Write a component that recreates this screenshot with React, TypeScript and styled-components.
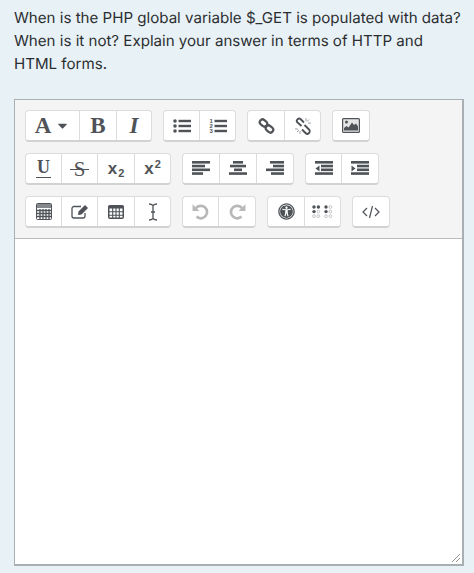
import React from "react";
import styled, { createGlobalStyle } from "styled-components";
import { FaUniversalAccess, FaCaretDown } from "react-icons/fa";

const INK = "#4f5357";

const GlobalStyle = createGlobalStyle`
  html, body {
    margin: 0;
    padding: 0;
    height: 100%;
    background: #e8f1f5;
  }
`;

// bars of the align / indent icons, as [x, width]
function Bars({ bars, children }: { bars: number[][]; children?: React.ReactNode }) {
  return (
    <svg width="18" height="15" viewBox="0 0 18 15">
      {bars.map(([x, w], i) => (
        <rect key={i} x={x} y={i * 3.75} width={w} height="2.6" fill={INK} />
      ))}
      {children}
    </svg>
  );
}

function ListUlIcon() {
  return (
    <svg width="18" height="14" viewBox="0 0 18 14">
      {[2, 7, 12].map((y) => (
        <g key={y}>
          <circle cx="2" cy={y} r="1.8" fill={INK} />
          <rect x="5.5" y={y - 1.2} width="12.5" height="2.4" fill={INK} />
        </g>
      ))}
    </svg>
  );
}

function ListOlIcon() {
  return (
    <svg width="18" height="18" viewBox="0 0 18 18">
      {[4, 9, 14].map((y, i) => (
        <g key={y}>
          <text x="0.5" y={y + 2} fontFamily="'Liberation Sans', sans-serif" fontWeight="bold" fontSize="6" fill={INK}>
            {i + 1}
          </text>
          <rect x="5.5" y={y - 1.2} width="12.5" height="2.4" fill={INK} />
        </g>
      ))}
    </svg>
  );
}

function LinkIcon() {
  return (
    <svg width="17" height="16" viewBox="0 0 17 16">
      <g fill="none" stroke={INK} strokeWidth="2.2">
        <rect x="1.5" y="2.2" width="8" height="5.6" rx="2.8" transform="rotate(40 5.5 5)" />
        <rect x="7.5" y="8.2" width="8" height="5.6" rx="2.8" transform="rotate(40 11.5 11)" />
      </g>
    </svg>
  );
}

function UnlinkIcon() {
  return (
    <svg width="18" height="18" viewBox="0 0 18 18">
      <path
        d="M7.5 9 3 5A2.400 2.400 0 0 1 6.500 2L10 5.500M10.500 8 15 12.500A2.400 2.400 0 0 1 11.500 16L8 12.500"
        fill="none"
        stroke={INK}
        strokeWidth="1.900"
      />
      <path
        d="M12 1v3M15 2.500l-2 2M17 6h-3M1 12h3M3 15l2-2M6 14v3"
        stroke="#85888b"
        strokeWidth="0.8"
      />
    </svg>
  );
}

function ImageIcon() {
  return (
    <svg width="18" height="15" viewBox="0 0 18 15">
      <rect x="0.6" y="0.6" width="16.8" height="13.8" rx="1" fill="#e4e4e4" stroke={INK} strokeWidth="1.2" />
      <circle cx="4.5" cy="4" r="1.5" fill={INK} />
      <path d="M2 12.5V10l2.5-2 2 1.500L10 4.500l2 2.500 2-1.500 2 3v4z" fill={INK} />
    </svg>
  );
}

function CalculatorIcon() {
  return (
    <svg width="16" height="17" viewBox="0 0 16 17">
      <rect x="0.5" y="0.5" width="15" height="16" rx="1" fill="#fff" stroke={INK} />
      <rect x="1" y="1" width="14" height="4" fill="#85888b" />
      <path
        d="M1 7.500h14M1 10.500h14M1 13.500h14M4 6v10M7 6v10M10 6v10M13 6v10"
        stroke={INK}
        strokeWidth="1.3"
        fill="none"
      />
    </svg>
  );
}

function EditIcon() {
  return (
    <svg width="18" height="15" viewBox="0 0 18 15">
      <path
        d="M10 2.500H3a2 2 0 0 0-2 2v7.500a2 2 0 0 0 2 2h9a2 2 0 0 0 2-2V9"
        fill="none"
        stroke={INK}
        strokeWidth="1.300"
      />
      <path d="M7.500 7.500 14 1l3 3-6.500 6.500-3.500.5z" fill={INK} />
    </svg>
  );
}

function TableIcon() {
  return (
    <svg width="16" height="14" viewBox="0 0 16 14">
      <rect x="0.75" y="0.75" width="14.5" height="12.5" rx="1" fill="#fff" stroke={INK} strokeWidth="1.5" />
      <rect x="1" y="1" width="14" height="2.5" fill={INK} />
      <path d="M1 6.800h14M1 10.200h14M4.700 3v10M8 3v10M11.300 3v10" stroke={INK} strokeWidth="1.100" fill="none" />
    </svg>
  );
}

function CursorIcon() {
  return (
    <svg width="10" height="18" viewBox="0 0 10 18">
      <path
        d="M1 1c2 0 3 .5 4 1.500C6 1.500 7 1 9 1M5 2.500v13M1 17c2 0 3-.5 4-1.500 1 1 2 1.500 4 1.500M3 9h4"
        stroke={INK}
        strokeWidth="1.3"
        fill="none"
      />
    </svg>
  );
}

function UndoIcon({ flip }: { flip?: boolean }) {
  return (
    <svg width="17" height="17" viewBox="0 0 15 15" style={flip ? { transform: "scaleX(-1)" } : undefined}>
      <path d="M3.500 4.500A5.500 5.500 0 1 1 4 12" fill="none" stroke="#b8b8b8" strokeWidth="2.400" />
      <path d="M0.500 1v6h6z" fill="#b8b8b8" />
    </svg>
  );
}

// which dots of the two braille cells are dark
const brailleDark = [
  [0, 1, 2],
  [0, 2],
];

function BrailleIcon() {
  const dots = [];
  for (let c = 0; c < 2; c++) {
    for (let i = 0; i < 6; i++) {
      const cx = 2 + c * 12 + (i % 2) * 4.4;
      const cy = 2 + Math.floor(i / 2) * 4.6;
      dots.push(
        brailleDark[c].includes(i) ? (
          <circle key={`${c}-${i}`} cx={cx} cy={cy} r="1.7" fill={INK} />
        ) : (
          <circle key={`${c}-${i}`} cx={cx} cy={cy} r="1.4" fill="none" stroke="#b5b8ba" strokeWidth="0.8" />
        )
      );
    }
  }
  return (
    <svg width="21" height="14" viewBox="0 0 21 14">
      {dots}
    </svg>
  );
}

function CodeIcon() {
  return (
    <svg width="18" height="14" viewBox="0 0 18 14">
      <path d="M5 3 1 7l4 4M13 3l4 4-4 4M10.500 1 7.500 13" stroke={INK} strokeWidth="1.2" fill="none" />
    </svg>
  );
}

const alignLeft = [[0, 18], [0, 13], [0, 18], [0, 11]];
const alignCenter = [[4, 10], [1, 16], [5, 8], [0, 18]];
const alignRight = [[4, 14], [7, 11], [0, 18], [5, 13]];
const indentBars = [[0, 18], [6, 12], [6, 12], [0, 18]];

function App() {
  return (
    <>
      <GlobalStyle />
      <Page>
        <Question>
          When is the PHP global variable $_GET is populated with data?
          <br />
          When is it not? Explain your answer in terms of HTTP and
          <br />
          HTML forms.
        </Question>
        <Editor>
          <Toolbar>
            <Row>
              <Group>
                <Btn $w={54}>
                  <SerifLetter>A</SerifLetter>
                  <FaCaretDown size={15} />
                </Btn>
                <Btn $w={37}>
                  <SerifLetter>B</SerifLetter>
                </Btn>
                <Btn $w={34}>
                  <SerifLetter $italic>I</SerifLetter>
                </Btn>
              </Group>
              <Group>
                <Btn>
                  <ListUlIcon />
                </Btn>
                <Btn $w={35}>
                  <ListOlIcon />
                </Btn>
              </Group>
              <Group>
                <Btn $w={37}>
                  <LinkIcon />
                </Btn>
                <Btn $w={35}>
                  <UnlinkIcon />
                </Btn>
              </Group>
              <Group>
                <Btn>
                  <ImageIcon />
                </Btn>
              </Group>
            </Row>
            <Row>
              <Group>
                <Btn>
                  <UnderLetter>U</UnderLetter>
                </Btn>
                <Btn $w={36}>
                  <StruckLetter>S</StruckLetter>
                </Btn>
                <Btn $w={37}>
                  <Script>
                    x<Lower>2</Lower>
                  </Script>
                </Btn>
                <Btn $w={35}>
                  <Script>
                    x<Upper>2</Upper>
                  </Script>
                </Btn>
              </Group>
              <Group>
                <Btn $w={37}>
                  <Bars bars={alignLeft} />
                </Btn>
                <Btn $w={37}>
                  <Bars bars={alignCenter} />
                </Btn>
                <Btn>
                  <Bars bars={alignRight} />
                </Btn>
              </Group>
              <Group>
                <Btn>
                  <Bars bars={indentBars}>
                    <path d="M0.500 7.400l4-3v6z" fill={INK} />
                  </Bars>
                </Btn>
                <Btn>
                  <Bars bars={indentBars}>
                    <path d="M4.500 7.400l-4-3v6z" fill={INK} />
                  </Bars>
                </Btn>
              </Group>
            </Row>
            <Row>
              <Group>
                <Btn>
                  <CalculatorIcon />
                </Btn>
                <Btn $w={36}>
                  <EditIcon />
                </Btn>
                <Btn $w={37}>
                  <TableIcon />
                </Btn>
                <Btn $w={35}>
                  <CursorIcon />
                </Btn>
              </Group>
              <Group>
                <Btn>
                  <UndoIcon />
                </Btn>
                <Btn>
                  <UndoIcon flip />
                </Btn>
              </Group>
              <Group>
                <Btn $w={37}>
                  <FaUniversalAccess size={17} />
                </Btn>
                <Btn $w={35}>
                  <BrailleIcon />
                </Btn>
              </Group>
              <Group>
                <Btn>
                  <CodeIcon />
                </Btn>
              </Group>
            </Row>
          </Toolbar>
          <TextArea />
        </Editor>
      </Page>
    </>
  );
}

export default App;

const Page = styled.div`
  box-sizing: border-box;
  width: 474px;
  height: 573px;
  padding: 6px 10px 7px 14px;
  display: flex;
  flex-direction: column;
  overflow: hidden;
  background: #e8f1f5;
`;

const Question = styled.div`
  font-family: Inter, "Liberation Sans", sans-serif;
  font-size: 15.1px;
  line-height: 23px;
  color: #2b2e31;
  margin-bottom: 24px;
  white-space: nowrap;
  text-rendering: geometricPrecision;
`;

const Editor = styled.div`
  flex: 1;
  display: flex;
  flex-direction: column;
  border: 1px solid #a9b0b3;
  border-right-width: 2px;
  border-bottom-width: 2px;
  background: #fff;
`;

const Toolbar = styled.div`
  display: flex;
  flex-direction: column;
  gap: 11px;
  padding: 10px;
  background: #f4f4f4;
  border-bottom: 1px solid #bbbbbb;
`;

const Row = styled.div`
  display: flex;
  gap: 11px;
`;

const Group = styled.div`
  display: flex;
  height: 32px;
  background: #fff;
  border: 1px solid #dcdcdc;
  border-bottom: 2px solid #d2d2d2;
  border-radius: 4px;
  box-sizing: border-box;
`;

const Btn = styled.div<{ $w?: number }>`
  box-sizing: border-box;
  width: ${(p) => p.$w ?? 36}px;
  display: flex;
  align-items: center;
  justify-content: center;
  gap: 4px;
  color: ${INK};
  border-right: 1px solid #dcdcdc;
  &:last-child {
    border-right: none;
  }
`;

const SerifLetter = styled.span<{ $italic?: boolean }>`
  font-family: "Liberation Serif", serif;
  font-weight: bold;
  font-size: 23px;
  font-style: ${(p) => (p.$italic ? "italic" : "normal")};
`;

const UnderLetter = styled.span`
  font-family: "Liberation Serif", serif;
  font-weight: bold;
  font-size: 18px;
  line-height: 17px;
  border-bottom: 1.5px solid ${INK};
  padding: 0 1px 1px;
`;

const StruckLetter = styled.span`
  position: relative;
  font-family: "Liberation Serif", serif;
  font-size: 21px;
  line-height: 20px;
  &::after {
    content: "";
    position: absolute;
    left: -4px;
    right: -4px;
    top: 10px;
    height: 1px;
    background: ${INK};
  }
`;

const Script = styled.span`
  font-family: "Liberation Sans", sans-serif;
  font-weight: bold;
  font-size: 17px;
`;

const Lower = styled.sub`
  font-size: 11px;
  margin-left: 1px;
  vertical-align: -3px;
  line-height: 0;
`;

const Upper = styled.sup`
  font-size: 11px;
  margin-left: 1px;
  vertical-align: 6px;
  line-height: 0;
`;

const TextArea = styled.div`
  flex: 1;
  position: relative;
  background: #fff;
  &::after {
    content: "";
    position: absolute;
    right: 2px;
    bottom: 2px;
    width: 8px;
    height: 8px;
    background: linear-gradient(
      135deg,
      transparent 45%,
      #999 45%,
      #999 52%,
      transparent 52%,
      transparent 70%,
      #999 70%,
      #999 77%,
      transparent 77%
    );
  }
`;
